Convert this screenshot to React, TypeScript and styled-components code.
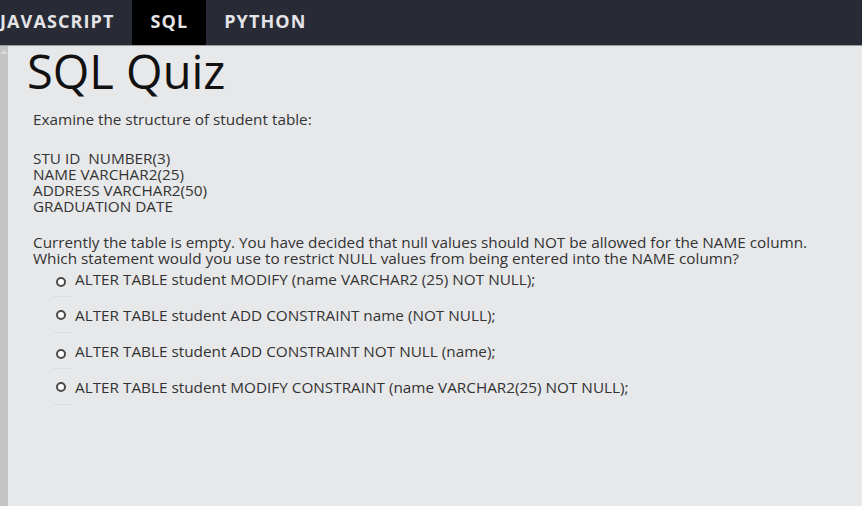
import styled, { createGlobalStyle } from 'styled-components';

const GlobalStyle = createGlobalStyle`
  html, body {
    margin: 0;
    padding: 0;
    background: #e7e8ea;
    font-family: 'Open Sans', 'Liberation Sans', sans-serif;
  }
`;

const tabs = ['JAVASCRIPT', 'SQL', 'PYTHON'];

const options = [
  { text: 'ALTER TABLE student MODIFY (name VARCHAR2 (25) NOT NULL);', low: true },
  { text: 'ALTER TABLE student ADD CONSTRAINT name (NOT NULL);', low: false },
  { text: 'ALTER TABLE student ADD CONSTRAINT NOT NULL (name);', low: true },
  { text: 'ALTER TABLE student MODIFY CONSTRAINT (name VARCHAR2(25) NOT NULL);', low: false },
];

const App = () => {
  return (
    <Page>
      <GlobalStyle />
      <Nav>
        {tabs.map((t, i) => (
          <Tab key={t} $active={t === 'SQL'} $first={i === 0}>
            {t}
          </Tab>
        ))}
      </Nav>
      <Body>
        <Gutter>
          <Arrow />
        </Gutter>
        <Content>
          <Title>SQL Quiz</Title>
          <Question>
            <Para>Examine the structure of student table:</Para>
            <Para>
              <Line>STU ID&nbsp; NUMBER(3)</Line>
              <Line>NAME VARCHAR2(25)</Line>
              <Line>ADDRESS VARCHAR2(50)</Line>
              <Line>GRADUATION DATE</Line>
            </Para>
            <Para>
              <Line>
                Currently the table is empty. You have decided that null values should NOT be
                allowed for the NAME column.
              </Line>
              <Line>
                Which statement would you use to restrict NULL values from being entered into the
                NAME column?
              </Line>
            </Para>
            <Options>
              {options.map(o => (
                <Option key={o.text}>
                  <Radio $low={o.low} />
                  <OptionText>{o.text}</OptionText>
                </Option>
              ))}
            </Options>
          </Question>
        </Content>
      </Body>
    </Page>
  );
};

const Page = styled.div`
  width: 862px;
  height: 506px;
  overflow: hidden;
  display: flex;
  flex-direction: column;
`;

const Nav = styled.div`
  height: 45px;
  background: #282a36;
  border-bottom: 1px solid #9a9ca3;
  display: flex;
  align-items: stretch;
  flex-shrink: 0;
`;

const Tab = styled.div<{ $active: boolean; $first: boolean }>`
  display: flex;
  align-items: center;
  padding: 0 18px 4px;
  padding-left: ${p => (p.$first ? '0' : '18px')};
  background: ${p => (p.$active ? '#000000' : 'transparent')};
  color: #e4e4e6;
  font-family: 'Open Sans', sans-serif;
  font-weight: 700;
  font-size: 18px;
  letter-spacing: 1.1px;
`;

const Body = styled.div`
  flex: 1;
  display: flex;
`;

const Gutter = styled.div`
  width: 8px;
  background: #c4c4c4;
  flex-shrink: 0;
`;

const Arrow = styled.div`
  margin-top: 4px;
  width: 0;
  height: 0;
  border-left: 4px solid transparent;
  border-right: 4px solid transparent;
  border-bottom: 4px solid #dadada;
`;

const Content = styled.div`
  flex: 1;
  padding-left: 19px;
`;

const Title = styled.h1`
  margin: -3px 0 0;
  font-family: 'Open Sans', sans-serif;
  font-weight: 400;
  font-size: 47px;
  line-height: 56px;
  color: #111111;
`;

const Question = styled.div`
  padding-left: 6px;
  margin-top: 10px;
  font-size: 15.3px;
  color: #333333;
`;

const Para = styled.div`
  margin: 0 0 20px 0;
  &:first-child {
    margin-bottom: 21px;
  }
`;

const Line = styled.div`
  height: 16px;
  line-height: 16px;
  white-space: nowrap;
`;

const Options = styled.div`
  margin-top: -25px;
  padding-left: 20px;
  display: flex;
  flex-direction: column;
`;

const Option = styled.div`
  display: flex;
  align-items: center;
  height: 36px;
  position: relative;
  &::after {
    content: '';
    position: absolute;
    left: 0;
    bottom: 0;
    width: 18px;
    height: 1px;
    background: #dcdddf;
  }
`;

const Radio = styled.span<{ $low: boolean }>`
  width: 6px;
  height: 6px;
  border: 2px solid #4a4a4a;
  border-radius: 50%;
  background: #ffffff;
  margin-left: 3px;
  margin-right: 9px;
  position: relative;
  top: ${p => (p.$low ? '3px' : '0')};
`;

const OptionText = styled.span`
  font-size: 15.3px;
  color: #333333;
`;

export default App;
